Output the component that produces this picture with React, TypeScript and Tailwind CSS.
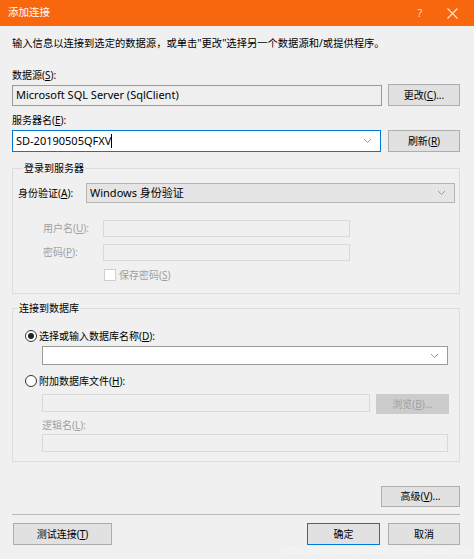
import React from 'react';

const font = { fontFamily: '"Noto Sans", "Noto Sans CJK SC", sans-serif' };

function Chevron() {
    return (
        <svg width="9" height="6" viewBox="0 0 9 6" className="shrink-0">
            <path d="M1 1 L4.5 4.5 L8 1" fill="none" stroke="#9a9a9a" strokeWidth="1" />
        </svg>
    );
}

function Key({ k }: { k: string }) {
    return (
        <>
            (<span className="underline">{k}</span>)
        </>
    );
}

function Button({ children, className = '', primary = false }: { children: React.ReactNode; className?: string; primary?: boolean }) {
    return (
        <div
            className={`flex items-center justify-center bg-[#e1e1e1] border text-[10px] text-black ${
                primary ? 'border-[#0078d7]' : 'border-[#adadad]'
            } ${className}`}
        >
            {children}
        </div>
    );
}

function Radio({ checked }: { checked?: boolean }) {
    return (
        <span className="w-[12px] h-[12px] rounded-full border border-[#333] bg-white flex items-center justify-center shrink-0">
            {checked && <span className="w-[6px] h-[6px] rounded-full bg-[#222]" />}
        </span>
    );
}

export default function App() {
    return (
        <div className="relative w-[474px] h-[559px] bg-[#f0f0f0] overflow-hidden text-black" style={font}>
            {/* Title bar */}
            <div className="h-[26px] bg-[#f8660e] flex items-center pl-[8px] text-white text-[10.5px]">
                <span>添加连接</span>
                <div className="ml-auto flex items-center">
                    <span className="w-[20px] text-center text-[11px] text-[#ffd9bf]">?</span>
                    <span className="w-[44px] flex justify-center">
                        <svg width="11" height="11" viewBox="0 0 11 11">
                            <path d="M0.5 0.5 L10.5 10.5 M10.5 0.5 L0.5 10.5" stroke="#ffe3d0" strokeWidth="1.2" />
                        </svg>
                    </span>
                </div>
            </div>

            <div className="pl-[12px] pr-[14px] text-[10px]">
                <p className="mt-[9px] leading-[16px] text-[10.3px]">输入信息以连接到选定的数据源，或单击"更改"选择另一个数据源和/或提供程序。</p>

                {/* Data source */}
                <div className="mt-[16px] leading-[16px]">
                    数据源<Key k="S" />:
                </div>
                <div className="mt-[1px] flex items-center justify-between">
                    <div className="w-[370px] h-[21px] border border-[#9a9a9a] bg-[#efefef] flex items-center pl-[3px] text-[11px]">
                        Microsoft SQL Server (SqlClient)
                    </div>
                    <Button className="w-[72px] h-[22px]">
                        更改<Key k="C" />...
                    </Button>
                </div>

                {/* Server name */}
                <div className="mt-[6px] leading-[16px]">
                    服务器名<Key k="E" />:
                </div>
                <div className="mt-[2px] flex items-center justify-between">
                    <div className="w-[369px] h-[22px] border border-[#0078d7] bg-white flex items-center pl-[3px] pr-[8px] text-[11px]">
                        <span>SD-20190505QFXV</span>
                        <span className="w-px h-[14px] bg-black" />
                        <span className="ml-auto">
                            <Chevron />
                        </span>
                    </div>
                    <Button className="w-[72px] h-[22px]">
                        刷新<Key k="R" />
                    </Button>
                </div>

                {/* Login group */}
                <fieldset className="mt-[8px] border border-[#dcdcdc] pl-[5px] pr-[4px] pb-[12px]">
                    <legend className="ml-[5px] px-px leading-[16px]">登录到服务器</legend>
                    <div className="mt-[7px] flex items-center">
                        <span className="w-[68px]">
                            身份验证<Key k="A" />:
                        </span>
                        <div className="w-[369px] h-[20px] border border-[#b4b4b4] bg-[#e5e5e5] flex items-center pl-[3px] pr-[8px] text-[11px]">
                            <span>Windows 身份验证</span>
                            <span className="ml-auto">
                                <Chevron />
                            </span>
                        </div>
                    </div>
                    <div className="mt-[17px] flex items-center text-[#a0a0a0]">
                        <span className="ml-[25px] w-[60px]">
                            用户名<Key k="U" />:
                        </span>
                        <div className="w-[247px] h-[17px] border border-[#d9d9d9] bg-[#f0f0f0]" />
                    </div>
                    <div className="mt-[7px] flex items-center text-[#a0a0a0]">
                        <span className="ml-[25px] w-[60px]">
                            密码<Key k="P" />:
                        </span>
                        <div className="w-[247px] h-[17px] border border-[#d9d9d9] bg-[#f0f0f0]" />
                    </div>
                    <div className="mt-[8px] flex items-center h-[12px] text-[#a0a0a0]">
                        <span className="ml-[86px] w-[12px] h-[12px] border border-[#cfcfcf] bg-white" />
                        <span className="ml-[3px]">
                            保存密码<Key k="S" />
                        </span>
                    </div>
                </fieldset>

                {/* Database group */}
                <fieldset className="mt-[6px] border border-[#dcdcdc] pb-[9px]">
                    <legend className="ml-[5px] px-px leading-[16px]">连接到数据库</legend>
                    <div className="mt-[12px] ml-[12px] flex items-center h-[16px]">
                        <Radio checked />
                        <span className="ml-[2px]">
                            选择或输入数据库名称<Key k="D" />:
                        </span>
                    </div>
                    <div className="mt-[2px] ml-[29px] w-[406px] h-[19px] border border-[#9a9a9a] bg-white flex items-center justify-end pr-[8px]">
                        <Chevron />
                    </div>
                    <div className="mt-[8px] ml-[12px] flex items-center h-[16px]">
                        <Radio />
                        <span className="ml-[2px]">
                            附加数据库文件<Key k="H" />:
                        </span>
                    </div>
                    <div className="mt-[5px] ml-[29px] flex items-start">
                        <div className="w-[328px] h-[18px] border border-[#d9d9d9] bg-[#f0f0f0]" />
                        <div className="ml-[6px] w-[73px] h-[20px] bg-[#cccccc] flex items-center justify-center text-[#a0a0a0]">
                            浏览<Key k="B" />...
                        </div>
                    </div>
                    <div className="mt-[3px] ml-[29px] leading-[16px] text-[#a0a0a0]">
                        逻辑名<Key k="L" />:
                    </div>
                    <div className="mt-[1px] ml-[29px] w-[406px] h-[18px] border border-[#d9d9d9] bg-[#f0f0f0]" />
                </fieldset>

                <div className="mt-[24px] flex justify-end">
                    <Button className="w-[79px] h-[21px]">
                        高级<Key k="V" />...
                    </Button>
                </div>
                <div className="mt-[7px] h-px bg-[#b9b9b9]" />
                <div className="mt-[8px] flex items-center">
                    <Button className="ml-px w-[99px] h-[22px]">
                        测试连接<Key k="T" />
                    </Button>
                    <Button primary className="ml-auto w-[73px] h-[22px]">
                        确定
                    </Button>
                    <Button className="ml-[8px] w-[72px] h-[22px]">取消</Button>
                </div>
            </div>

            {/* watermark */}
            <div className="absolute right-[2px] bottom-[1px] text-[11px] text-white/40 tracking-tight" style={{ fontFamily: '"Liberation Sans", sans-serif' }}>
                https://blog.csdn.net/qq_angelphone4595
            </div>
        </div>
    );
}
